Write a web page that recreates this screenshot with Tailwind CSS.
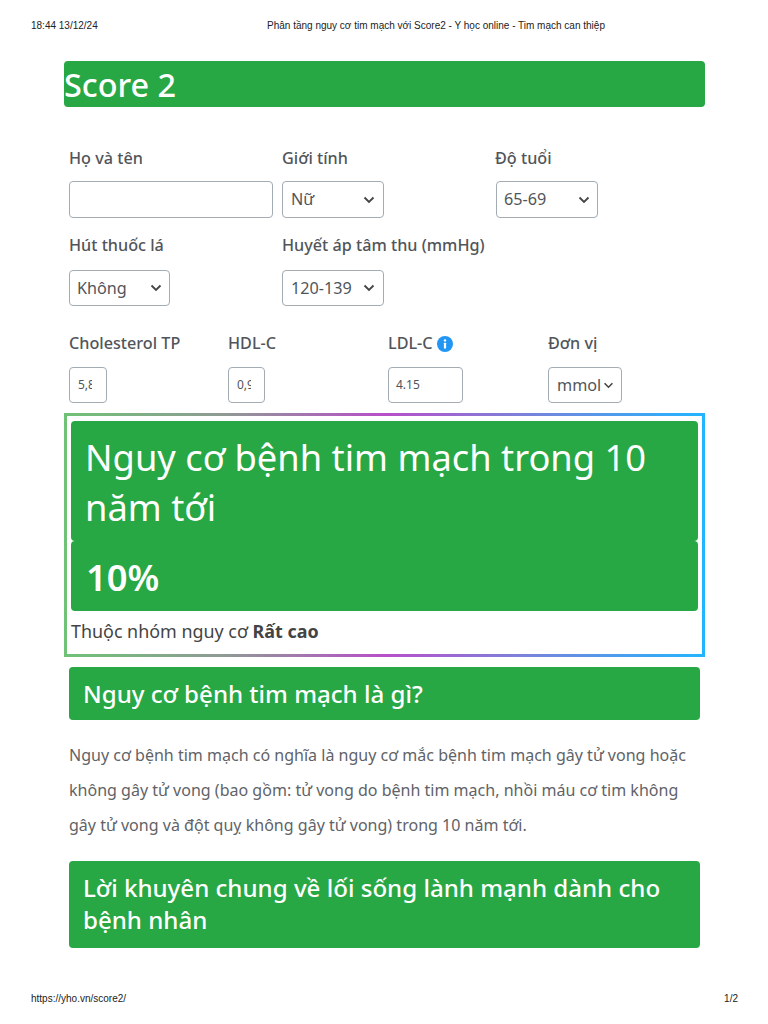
<!doctype html>
<html lang="vi">
<head>
<meta charset="utf-8">
<script src="https://cdn.jsdelivr.net/npm/@tailwindcss/browser@4"></script>
</head>
<body class="bg-white">
<div class="relative w-[768px] h-[1024px] overflow-hidden font-['Noto_Sans',sans-serif] text-[#51555a]">
  <div class="flex h-[52px] pt-[19px] px-[31px] font-['Liberation_Sans',sans-serif] text-[10px] leading-[13px] text-[#222]">
    <span class="w-[150px]">18:44 13/12/24</span>
    <span class="flex-1 text-center pr-[46px]">Phân tầng nguy cơ tim mạch với Score2 - Y học online - Tim mạch can thiệp</span>
  </div>
  <div class="ml-[64px] mt-[9px] w-[641px]">
    <h1 class="h-[46px] rounded-[4px] bg-[#28a745] text-white text-[32.4px] leading-[47px] font-medium">Score 2</h1>

    <div class="ml-[5px] mt-[40px] grid grid-cols-[213px_213px_1fr] text-[16.2px] font-medium">
      <div><label class="block h-[34px] leading-[22px]">Họ và tên</label><div class="w-[204px] h-[37px] rounded-[4px] border border-[#a3abb3]"></div></div>
      <div><label class="block h-[34px] leading-[22px]">Giới tính</label><div class="w-[102px] h-[37px] rounded-[4px] border border-[#a3abb3] flex items-center justify-between px-[8px] font-normal"><span>Nữ</span><svg width="12" height="8" viewBox="0 0 12 8" fill="none" stroke="#444" stroke-width="1.8"><path d="M1.5 1.5 6 6l4.5-4.5"/></svg></div></div>
      <div><label class="block h-[34px] leading-[22px]">Độ tuổi</label><div class="ml-px w-[102px] h-[37px] rounded-[4px] border border-[#a3abb3] flex items-center justify-between px-[7px] font-normal"><span>65-69</span><svg width="12" height="8" viewBox="0 0 12 8" fill="none" stroke="#444" stroke-width="1.8"><path d="M1.5 1.5 6 6l4.5-4.5"/></svg></div></div>
    </div>

    <div class="ml-[5px] mt-[15px] grid grid-cols-[213px_1fr] text-[16.2px] font-medium">
      <div><label class="block h-[37px] leading-[24px]">Hút thuốc lá</label><div class="w-[101px] h-[36px] rounded-[4px] border border-[#a3abb3] flex items-center justify-between px-[7px] font-normal"><span>Không</span><svg width="12" height="8" viewBox="0 0 12 8" fill="none" stroke="#444" stroke-width="1.8"><path d="M1.5 1.5 6 6l4.5-4.5"/></svg></div></div>
      <div><label class="block h-[37px] leading-[24px]">Huyết áp tâm thu (mmHg)</label><div class="w-[102px] h-[36px] rounded-[4px] border border-[#a3abb3] flex items-center justify-between px-[8px] font-normal"><span>120-139</span><svg width="12" height="8" viewBox="0 0 12 8" fill="none" stroke="#444" stroke-width="1.8"><path d="M1.5 1.5 6 6l4.5-4.5"/></svg></div></div>
    </div>

    <div class="ml-[5px] mt-[25px] grid grid-cols-[159px_160px_160px_1fr] text-[16.2px] font-medium">
      <div><label class="block h-[36px] leading-[24px]">Cholesterol TP</label><div class="w-[38px] h-[36px] rounded-[4px] border border-[#a3abb3] flex items-center pl-[8px] text-[12px] font-normal"><span class="w-[14px] overflow-hidden whitespace-nowrap">5,8</span></div></div>
      <div><label class="block h-[36px] leading-[24px]">HDL-C</label><div class="w-[37px] h-[36px] rounded-[4px] border border-[#a3abb3] flex items-center pl-[8px] text-[12px] font-normal"><span class="w-[14px] overflow-hidden whitespace-nowrap">0,9</span></div></div>
      <div><label class="flex items-start gap-[4px] h-[36px] leading-[24px]">LDL-C<svg class="mt-[5px]" width="16" height="16" viewBox="0 0 16 16"><circle cx="8" cy="8" r="8" fill="#2196f3"/><circle cx="8" cy="4.4" r="1.2" fill="#fff"/><rect x="6.9" y="6.8" width="2.2" height="5.6" rx=".5" fill="#fff"/></svg></label><div class="w-[75px] h-[36px] rounded-[4px] border border-[#a3abb3] flex items-center pl-[7px] text-[12px] font-normal">4.15</div></div>
      <div><label class="block h-[36px] leading-[24px]">Đơn vị</label><div class="w-[74px] h-[36px] rounded-[4px] border border-[#a3abb3] flex items-center justify-between pl-[8px] pr-[7px] font-normal"><span>mmol</span><svg width="11" height="7" viewBox="0 0 12 8" fill="none" stroke="#444" stroke-width="1.8"><path d="M1.5 1.5 6 6l4.5-4.5"/></svg></div></div>
    </div>

    <div class="mt-[10px] p-[3px] bg-[linear-gradient(to_right,#6fc276,#8f9a95_25%,#b84fc9_50%,#7f7fd8_70%,#22b5ff)]">
      <div class="bg-white h-[238px] pt-[5px] px-[4px]">
        <div class="h-[120px] rounded-[4px] bg-[#28a745] text-white text-[36.3px] leading-[50px] px-[14px] pt-[11px] font-normal">Nguy cơ bệnh tim mạch trong 10 năm tới</div>
        <div class="h-[70px] rounded-[4px] bg-[#28a745] text-white text-[36.3px] leading-[72px] px-[15px] font-semibold">10%</div>
        <p class="mt-[5px] text-[17.9px] leading-[30px] text-[#444]">Thuộc nhóm nguy cơ <b class="font-bold">Rất cao</b></p>
      </div>
    </div>

    <div class="ml-[5px] mt-[10px] w-[631px]">
      <h2 class="h-[53px] rounded-[4px] bg-[#28a745] text-white text-[24.1px] leading-[53px] px-[14px] font-medium">Nguy cơ bệnh tim mạch là gì?</h2>
      <p class="mt-[18px] text-[16.05px] leading-[35px] text-[#5f6368]">Nguy cơ bệnh tim mạch có nghĩa là nguy cơ mắc bệnh tim mạch gây tử vong hoặc không gây tử vong (bao gồm: tử vong do bệnh tim mạch, nhồi máu cơ tim không gây tử vong và đột quỵ không gây tử vong) trong 10 năm tới.</p>
      <h2 class="mt-[18px] h-[87px] rounded-[4px] bg-[#28a745] text-white text-[24.1px] leading-[32px] px-[14px] pt-[11px] font-medium">Lời khuyên chung về lối sống lành mạnh dành cho bệnh nhân</h2>
    </div>
  </div>
  <div class="absolute left-[31px] right-[30px] top-[992px] flex justify-between font-['Liberation_Sans',sans-serif] text-[10px] leading-[13px] text-[#222]">
    <span>https://yho.vn/score2/</span><span>1/2</span>
  </div>
</div>
</body>
</html>
